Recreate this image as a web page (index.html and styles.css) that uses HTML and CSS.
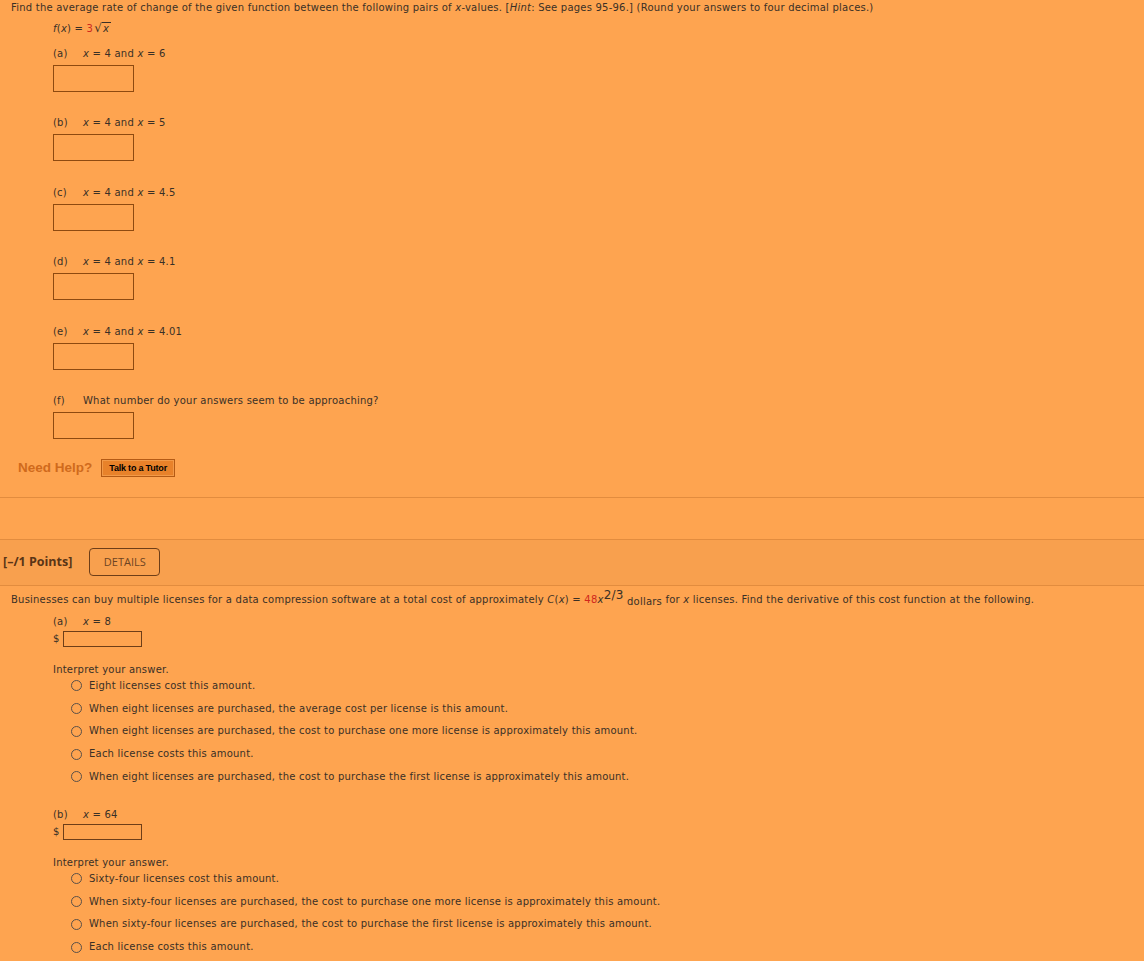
FILE: index.html
```html
<!DOCTYPE html>
<html>
<head>
<meta charset="utf-8">
<link rel="stylesheet" href="styles.css">
</head>
<body>
<div class="q1">
  <div class="qtext">Find the average rate of change of the given function between the following pairs of <i>x</i>-values. [<i>Hint</i>: See pages 95-96.] (Round your answers to four decimal places.)</div>
  <div class="indent">
    <div class="func"><i>f</i>(<i>x</i>) = <span class="red">3</span><span class="rad">√</span><span class="radicand"><i>x</i></span></div>
    <div class="part">
      <div class="plabel"><span class="pl">(a)</span><i>x</i> = 4 and <i>x</i> = 6</div>
      <div class="box"></div>
    </div>
    <div class="part">
      <div class="plabel"><span class="pl">(b)</span><i>x</i> = 4 and <i>x</i> = 5</div>
      <div class="box"></div>
    </div>
    <div class="part">
      <div class="plabel"><span class="pl">(c)</span><i>x</i> = 4 and <i>x</i> = 4.5</div>
      <div class="box"></div>
    </div>
    <div class="part">
      <div class="plabel"><span class="pl">(d)</span><i>x</i> = 4 and <i>x</i> = 4.1</div>
      <div class="box"></div>
    </div>
    <div class="part">
      <div class="plabel"><span class="pl">(e)</span><i>x</i> = 4 and <i>x</i> = 4.01</div>
      <div class="box"></div>
    </div>
    <div class="part last">
      <div class="plabel"><span class="pl">(f)</span>What number do your answers seem to be approaching?</div>
      <div class="box"></div>
    </div>
  </div>
  <div class="help">
    <span class="needhelp">Need Help?</span>
    <span class="tutor">Talk to a Tutor</span>
  </div>
</div>
<div class="gap"></div>
<div class="band">
  <span class="points">[–/1 Points]</span>
  <span class="details">DETAILS</span>
</div>
<div class="q2">
  <div class="qtext">Businesses can buy multiple licenses for a data compression software at a total cost of approximately <i>C</i>(<i>x</i>) = <span class="red">48</span><i>x</i><sup>2/3</sup> <span class="low">dollars</span> for <i>x</i> licenses. Find the derivative of this cost function at the following.</div>
  <div class="indent">
    <div class="plabel2"><span class="pl">(a)</span><i>x</i> = 8</div>
    <div class="dollar">$ <span class="sbox"></span></div>
    <div class="interp">Interpret your answer.</div>
    <ul class="opts">
      <li><span class="radio"></span>Eight licenses cost this amount.</li>
      <li><span class="radio"></span>When eight licenses are purchased, the average cost per license is this amount.</li>
      <li><span class="radio"></span>When eight licenses are purchased, the cost to purchase one more license is approximately this amount.</li>
      <li><span class="radio"></span>Each license costs this amount.</li>
      <li><span class="radio"></span>When eight licenses are purchased, the cost to purchase the first license is approximately this amount.</li>
    </ul>
    <div class="plabel2 second"><span class="pl">(b)</span><i>x</i> = 64</div>
    <div class="dollar">$ <span class="sbox"></span></div>
    <div class="interp">Interpret your answer.</div>
    <ul class="opts">
      <li><span class="radio"></span>Sixty-four licenses cost this amount.</li>
      <li><span class="radio"></span>When sixty-four licenses are purchased, the cost to purchase one more license is approximately this amount.</li>
      <li><span class="radio"></span>When sixty-four licenses are purchased, the cost to purchase the first license is approximately this amount.</li>
      <li><span class="radio"></span>Each license costs this amount.</li>
    </ul>
  </div>
</div>
</body>
</html>
```
FILE: styles.css
```css
html, body {
  margin: 0;
  padding: 0;
  background: #fea450;
}
body {
  font-family: "DejaVu Sans", Verdana, sans-serif;
  font-size: 10px;
  letter-spacing: 0.22px;
  color: #3a3026;
  line-height: 14px;
  overflow: hidden;
  height: 961px;
}
.q1 {
  padding: 1px 0 0 11px;
}
.qtext {
  height: 14px;
  white-space: nowrap;
}
.indent {
  padding-left: 42px;
}
.func {
  margin-top: 6px;
  height: 14px;
}
.red { color: #d0281c; }
.rad {
  margin-left: 1px;
  font-size: 12px;
}
.radicand {
  border-top: 1px solid #3a3026;
  padding: 0 2px 0 1px;
}
.part {
  margin-top: 12px;
}
.part + .part {
  margin-top: 24.4px;
}
.plabel {
  height: 14px;
}
.pl {
  display: inline-block;
  width: 30px;
}
.box {
  margin-top: 4px;
  width: 79px;
  height: 25px;
  border: 1px solid #8e4a10;
}
.help {
  margin-top: 20px;
  padding-left: 7px;
  display: flex;
  align-items: center;
  height: 18px;
}
.needhelp {
  font-family: "Liberation Sans", Arial, sans-serif;
  font-weight: bold;
  font-size: 13.5px;
  letter-spacing: 0;
  color: #d06a1c;
  margin-right: 9px;
}
.tutor {
  font-family: "Liberation Sans", Arial, sans-serif;
  font-weight: bold;
  font-size: 9px;
  letter-spacing: -0.2px;
  color: #000;
  background: #e8822a;
  border: 1px solid #b45a14;
  box-shadow: inset 0 0 0 1px #f29a48;
  height: 16px;
  line-height: 16px;
  padding: 0 7px;
}
.gap {
  margin-top: 20px;
  height: 41px;
  border-top: 1px solid #e28c3e;
}
.band {
  background: #f8a04e;
  border-top: 1px solid #e28c3e;
  border-bottom: 1px solid #e28c3e;
  height: 45px;
  display: flex;
  align-items: center;
  padding-left: 3px;
  font-family: "Open Sans", sans-serif;
  letter-spacing: 0;
}
.points {
  font-weight: bold;
  font-size: 12.5px;
  color: #5a3516;
}
.details {
  margin-left: 17px;
  width: 69px;
  height: 26px;
  border: 1px solid #6e3e18;
  border-radius: 4px;
  display: flex;
  align-items: center;
  justify-content: center;
  font-size: 11px;
  color: #6e4422;
}
.q2 {
  padding: 7px 0 0 11px;
}
.q2 .qtext {
  height: 14px;
}
sup {
  font-size: 12px;
  line-height: 0;
  vertical-align: 4px;
}
.low {
  position: relative;
  top: 2px;
}
.plabel2 {
  margin-top: 8px;
  height: 14px;
}
.plabel2.second {
  margin-top: 24px;
}
.dollar {
  height: 16px;
  display: flex;
  align-items: center;
  margin-top: 2px;
}
.sbox {
  display: inline-block;
  width: 77px;
  height: 14px;
  border: 1px solid #6e3e18;
  margin-left: 3px;
}
.interp {
  margin-top: 16px;
  height: 14px;
}
.opts {
  list-style: none;
  margin: 2px 0 0 0;
  padding: 0 0 0 18px;
}
.opts li {
  height: 14px;
  display: flex;
  align-items: center;
  margin-bottom: 8.75px;
}
.radio {
  display: inline-block;
  width: 9px;
  height: 9px;
  border: 1px solid #5a5048;
  border-radius: 50%;
  margin-right: 7px;
}
```
